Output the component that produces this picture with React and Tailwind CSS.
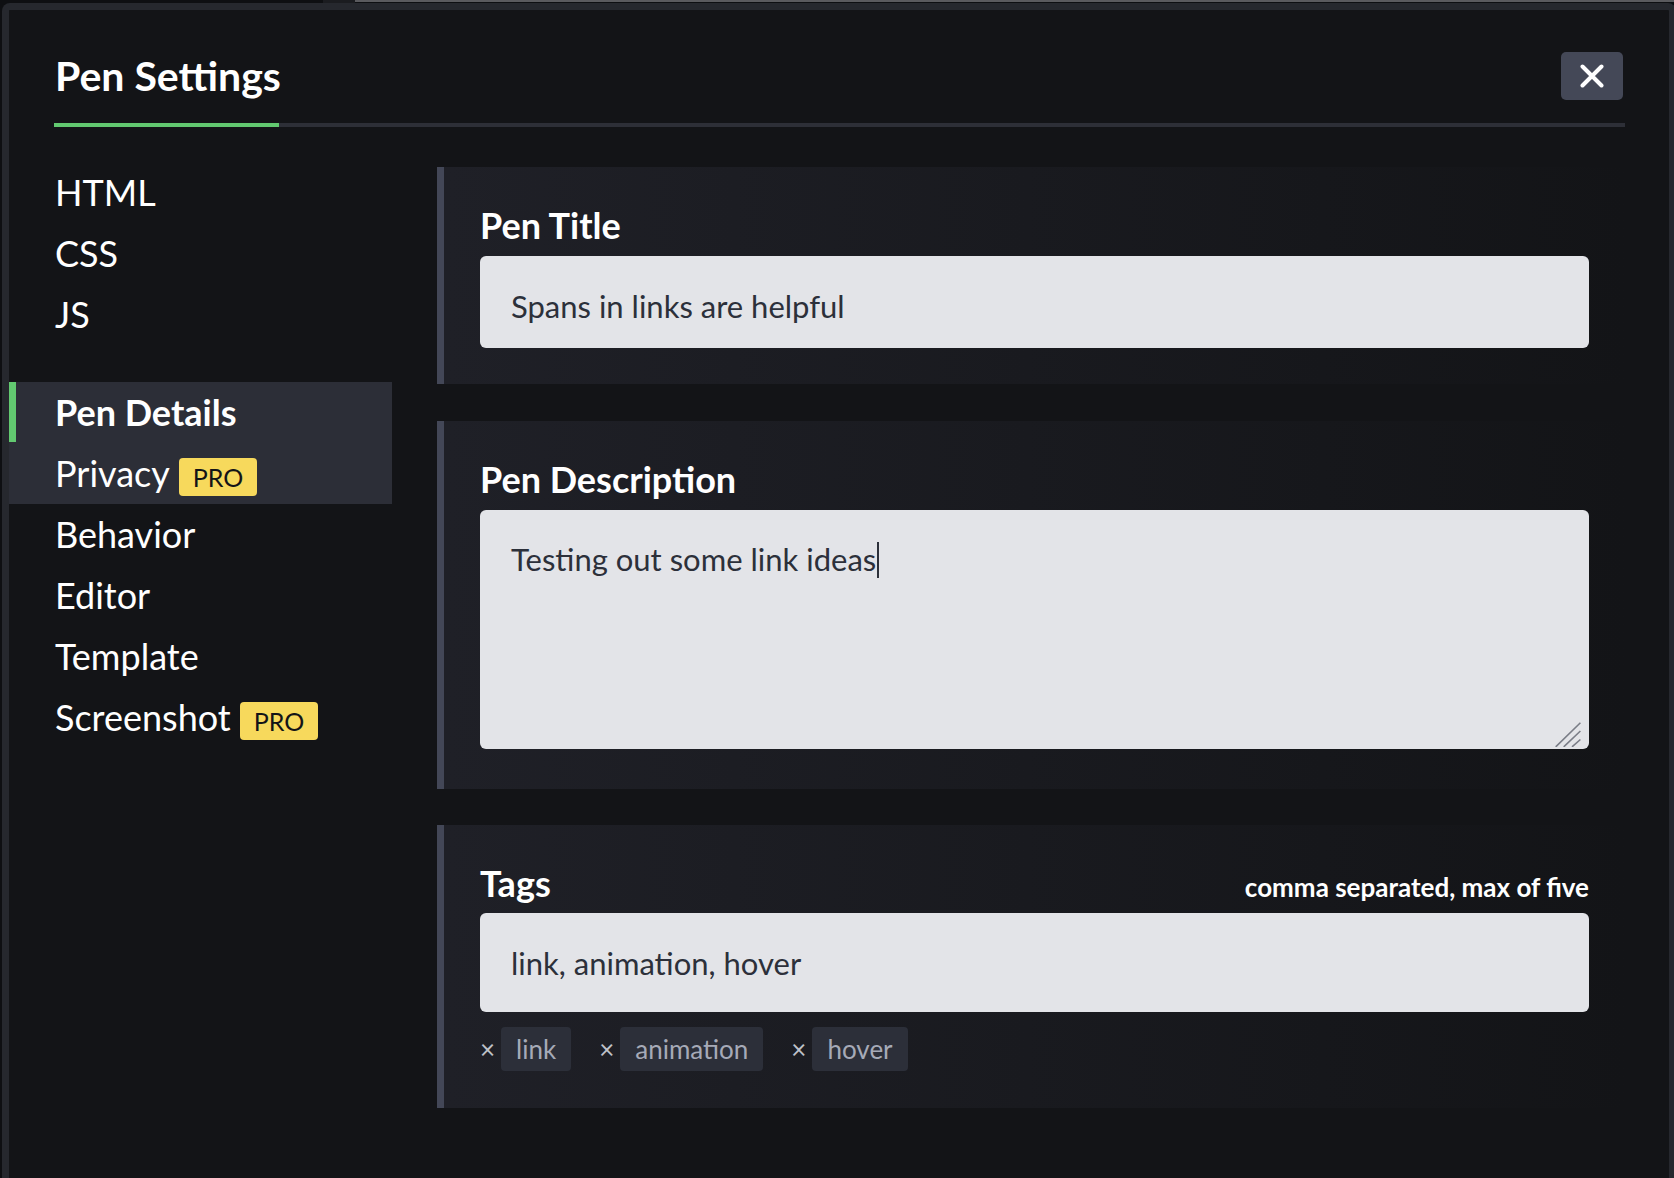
import React from "react";

const TOP_ITEMS = ["HTML", "CSS", "JS"];
const OTHER_ITEMS = [
  { label: "Behavior" },
  { label: "Editor" },
  { label: "Template" },
  { label: "Screenshot", pro: true },
];
const TAGS = ["link", "animation", "hover"];

const ProBadge = () => (
  <span className="ml-[9px] mt-[6px] h-[38px] px-[14px] rounded-[4px] bg-[#f7d95c] text-[#131417] text-[25px] leading-[38px]">
    PRO
  </span>
);

const CloseIcon = () => (
  <svg width="24" height="24" viewBox="0 0 24 24" fill="none">
    <path d="M2.5 2.5L21.5 21.5M21.5 2.5L2.5 21.5" stroke="#ffffff" strokeWidth="4" strokeLinecap="round" />
  </svg>
);

const ResizeHandle = () => (
  <svg className="absolute bottom-[2px] right-[8px]" width="27" height="26" viewBox="0 0 27 26" fill="none">
    <path
      d="M1.7 25.9L26.4 1.8M9.7 25.9L26.4 10M18 25.9L26.4 18.5"
      stroke="#7a7d87"
      strokeWidth="1.6"
    />
  </svg>
);

const Panel = ({ className = "", children }) => (
  <section
    className={`border-l-[7px] border-[#434757] bg-linear-to-r from-[#1f2027] to-[#131417] px-[36px] pt-[36px] ${className}`}
  >
    {children}
  </section>
);

const Label = ({ children }) => (
  <h3 className="text-[36px] font-bold leading-[44px] text-white">{children}</h3>
);

export default function App() {
  return (
    <div className="w-[1674px] h-[1178px] overflow-hidden bg-[#0e0f12] font-['Lato',sans-serif]">
      {/* what shows behind the modal */}
      <div className="flex h-[3px]">
        <div className="w-[323px] bg-[#0e0f12]" />
        <div className="w-[32px] bg-[#1b1c20]" />
        <div className="flex-1 border-t-2 border-[#5a5a5e] bg-[#0e0f12]" />
      </div>

      <div className="ml-[2px] w-[1674px] h-[1175px] border-[7px] border-b-0 border-[#26282e] rounded-t-[8px] bg-[#131417]">
        {/* header */}
        <header className="pt-[42px] pl-[45px] pr-[44px]">
          <div className="flex items-center justify-between h-[48px]">
            <h2 className="pl-[1px] text-[41px] font-bold leading-[48px] text-white">Pen Settings</h2>
            <button className="flex items-center justify-center w-[62px] h-[48px] mr-[2px] rounded-[5px] bg-[#444857]">
              <CloseIcon />
            </button>
          </div>
          <div className="mt-[23px] h-[4px] bg-[#2d2f37]">
            <div className="w-[225px] h-full bg-[#62c970]" />
          </div>
        </header>

        <div className="flex">
          {/* sidebar */}
          <nav className="w-[383px] mt-[35px] text-white text-[36px] leading-[61px]">
            {TOP_ITEMS.map((item) => (
              <div key={item} className="pl-[46px] h-[61px]">
                {item}
              </div>
            ))}
            <div className="mt-[37px] bg-[#2c2e37]">
              <div className="flex h-[61px]">
                <div className="w-[7px] h-[60px] bg-[#62c970]" />
                <span className="pl-[39px] font-bold">Pen Details</span>
              </div>
              <div className="flex items-center pl-[46px] h-[61px]">
                <span>Privacy</span>
                <ProBadge />
              </div>
            </div>
            {OTHER_ITEMS.map((item) => (
              <div key={item.label} className="flex items-center pl-[46px] h-[61px]">
                <span>{item.label}</span>
                {item.pro && <ProBadge />}
              </div>
            ))}
          </nav>

          {/* content */}
          <main className="ml-[45px] w-[1188px] mt-[40px]">
            <Panel className="pb-[36px]">
              <Label>Pen Title</Label>
              <div className="mt-[9px] h-[92px] rounded-[6px] bg-[#e3e4e8] px-[31px] pt-[32px] text-[31px] leading-[37px] text-[#2c303a]">
                Spans in links are helpful
              </div>
            </Panel>

            <Panel className="mt-[37px] pb-[40px]">
              <Label>Pen Description</Label>
              <div className="relative mt-[9px] h-[239px] rounded-[6px] bg-[#e3e4e8] px-[31px] pt-[31px] text-[31px] leading-[37px] text-[#2c303a]">
                Testing out some link ideas
                <span className="inline-block w-[2px] h-[36px] ml-[1px] align-[-7px] bg-[#2c303a]" />
                <ResizeHandle />
              </div>
            </Panel>

            <Panel className="mt-[36px] pb-[37px]">
              <div className="flex items-baseline justify-between">
                <Label>Tags</Label>
                <span className="text-[26px] font-bold text-white">comma separated, max of five</span>
              </div>
              <div className="mt-[6px] h-[99px] rounded-[6px] bg-[#e3e4e8] px-[31px] pt-[32px] text-[31px] leading-[37px] text-[#2c303a]">
                link, animation, hover
              </div>
              <div className="mt-[15px] flex items-center gap-[28px]">
                {TAGS.map((tag) => (
                  <div key={tag} className="flex items-center gap-[6px]">
                    <span className="text-[26px] leading-none text-[#bfc1c8]">×</span>
                    <span className="h-[44px] px-[15px] rounded-[4px] bg-[#2c2f39] text-[26px] leading-[44px] text-[#a6aab7]">
                      {tag}
                    </span>
                  </div>
                ))}
              </div>
            </Panel>
          </main>
        </div>
      </div>
    </div>
  );
}
